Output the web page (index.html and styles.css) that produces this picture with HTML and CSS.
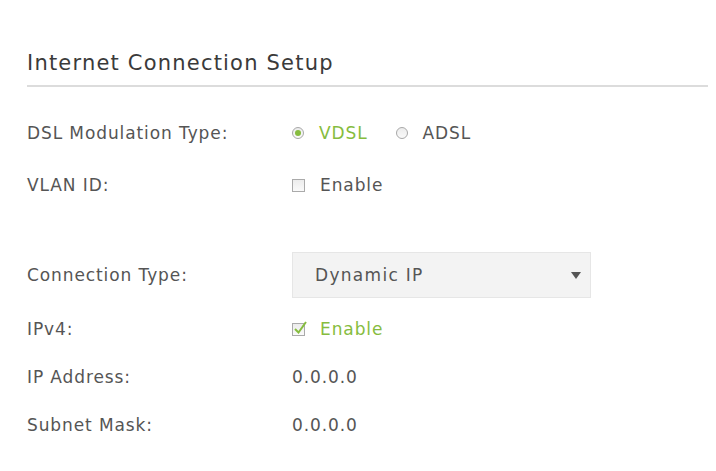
FILE: index.html
```html
<!DOCTYPE html>
<html>
<head>
<meta charset="utf-8">
<link rel="stylesheet" href="styles.css">
</head>
<body>
<div class="page">
  <div class="header">Internet Connection Setup</div>
  <div class="row tall">
    <div class="label">DSL Modulation Type:</div>
    <div class="control">
      <span class="radio checked"></span><span class="opt green">VDSL</span>
      <span class="radio second"></span><span class="opt">ADSL</span>
    </div>
  </div>
  <div class="row tall">
    <div class="label">VLAN ID:</div>
    <div class="control">
      <span class="check"></span><span class="opt">Enable</span>
    </div>
  </div>
  <div class="row select-row">
    <div class="label">Connection Type:</div>
    <div class="control">
      <div class="select"><span class="sel-text">Dynamic IP</span><span class="arrow"></span></div>
    </div>
  </div>
  <div class="row">
    <div class="label">IPv4:</div>
    <div class="control">
      <span class="check on"><svg width="17" height="17" viewBox="0 0 17 17"><path d="M3 9 L6.5 12.5 L14 2" fill="none" stroke="#86bc3e" stroke-width="2"/></svg></span><span class="opt green">Enable</span>
    </div>
  </div>
  <div class="row">
    <div class="label">IP Address:</div>
    <div class="control value">0.0.0.0</div>
  </div>
  <div class="row">
    <div class="label">Subnet Mask:</div>
    <div class="control value">0.0.0.0</div>
  </div>
</div>
</body>
</html>
```

FILE: styles.css
```css
html, body {
  margin: 0;
  padding: 0;
  background: #fff;
}
body {
  font-family: "DejaVu Sans", Verdana, sans-serif;
  color: #555;
}
.page {
  padding: 0 8px 0 27px;
}
.header {
  margin-top: 49px;
  font-size: 21px;
  line-height: 28px;
  padding-bottom: 8px;
  border-bottom: 2px solid #dcdcdc;
  color: #3a3a3a;
  letter-spacing: 1.2px;
}
.row {
  display: flex;
  align-items: center;
  height: 48px;
  font-size: 17px;
  letter-spacing: 0.9px;
}
.row.tall {
  height: 52px;
}
.header + .row {
  margin-top: 20px;
}
.select-row {
  height: 57px;
  margin-top: 37px;
  align-items: flex-start;
  padding-top: 4px;
  box-sizing: border-box;
}
.select-row .label {
  line-height: 46px;
}
.label {
  width: 265px;
  flex: none;
}
.control {
  display: flex;
  align-items: center;
}
.opt {
  margin-left: 15px;
}
.opt + .radio {
  margin-left: 28px;
}
.green {
  color: #86bc3e;
}
.radio {
  width: 10px;
  height: 10px;
  border: 1.5px solid #a8a8a8;
  border-radius: 50%;
  background: linear-gradient(#ececec, #fafafa);
  position: relative;
  flex: none;
}
.radio.checked::after {
  content: "";
  position: absolute;
  left: 2px;
  top: 2px;
  width: 6px;
  height: 6px;
  border-radius: 50%;
  background: #86bc3e;
}
.check {
  width: 11px;
  height: 11px;
  border: 1px solid #aaa;
  background: linear-gradient(#ececec, #fafafa);
  position: relative;
  flex: none;
}
.check svg {
  position: absolute;
  left: -1px;
  top: -4px;
}
.select {
  height: 44px;
  width: 266px;
  border: 1px solid #e6e6e6;
  background: #f3f3f3;
  display: flex;
  align-items: center;
  justify-content: space-between;
  padding: 0 9px 0 22px;
}
.sel-text {
  letter-spacing: 1.3px;
}
.arrow {
  width: 0;
  height: 0;
  border-left: 5.5px solid transparent;
  border-right: 5.5px solid transparent;
  border-top: 7px solid #555;
}
```
